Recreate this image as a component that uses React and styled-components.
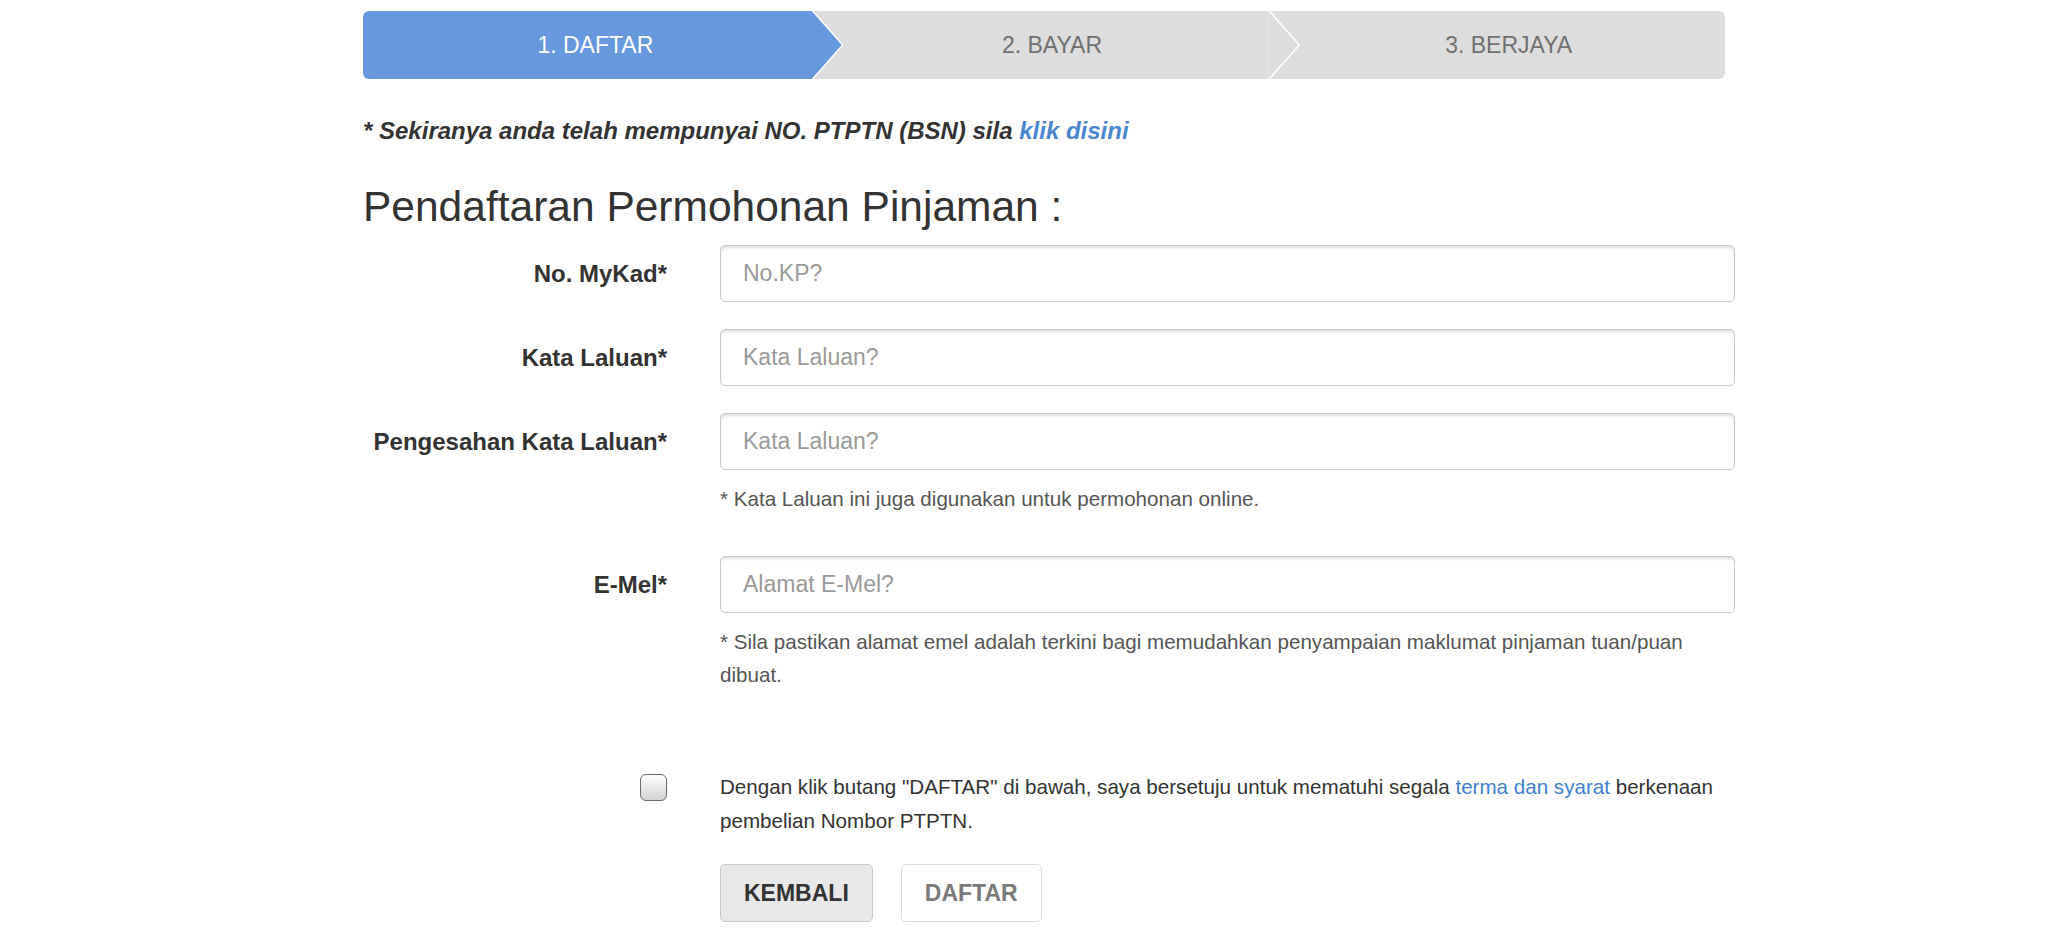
import React from "react";
import styled, { createGlobalStyle, css } from "styled-components";

const GlobalStyle = createGlobalStyle`
  body {
    margin: 0;
    background: #ffffff;
    font-family: "Liberation Sans", Arial, Helvetica, sans-serif;
    color: #333333;
  }
`;

const Page = styled.div`
  width: 1372px;
  margin-left: 363px;
  padding-top: 11px;
`;

// stepper
const Stepper = styled.div`
  display: flex;
  width: 1362px;
  height: 68px;
`;

const Step = styled.div`
  position: relative;
  flex: 1;
  display: flex;
  align-items: center;
  justify-content: center;
  padding-left: ${(p) => (p.$first ? "16px" : "24px")};
  font-size: 23px;
  background: ${(p) => (p.$active ? "#6698dd" : "#dddddd")};
  color: ${(p) => (p.$active ? "#ffffff" : "#707070")};
  z-index: ${(p) => p.$z};

  &:first-child {
    border-radius: 6px 0 0 6px;
  }
  &:last-child {
    border-radius: 0 6px 6px 0;
  }

  ${(p) =>
    p.$arrow &&
    css`
      &::before {
        content: "";
        position: absolute;
        top: 0;
        right: -32px;
        width: 32px;
        height: 68px;
        background: #ffffff;
        clip-path: polygon(0 0, 2px 0, 32px 50%, 2px 100%, 0 100%);
      }
      &::after {
        content: "";
        position: absolute;
        top: 0;
        right: -30px;
        width: 30px;
        height: 68px;
        background: ${p.$active ? "#6698dd" : "#dddddd"};
        clip-path: polygon(0 0, 30px 50%, 0 100%);
      }
    `}
`;

const Notice = styled.p`
  margin: 38px 0 0;
  font-size: 24px;
  line-height: 28px;
  font-weight: bold;
  font-style: italic;
  color: #333333;
`;

const Link = styled.a`
  color: ${(p) => p.$color || "#4a86d0"};
  text-decoration: none;
`;

const Heading = styled.h1`
  margin: 37px 0 13px;
  font-size: 42.5px;
  line-height: 50px;
  font-weight: normal;
  color: #333333;
`;

// form
const Row = styled.div`
  display: grid;
  grid-template-columns: 304px 1015px;
  column-gap: 53px;
  align-items: start;
  margin-bottom: ${(p) => p.$mb || "27px"};
  margin-top: ${(p) => p.$mt || "0"};
`;

const Label = styled.label`
  height: 57px;
  display: flex;
  align-items: center;
  justify-content: flex-end;
  font-size: 24px;
  font-weight: bold;
  color: #333333;
  white-space: nowrap;
`;

const Field = styled.div`
  display: flex;
  flex-direction: column;
`;

const Input = styled.input`
  box-sizing: border-box;
  width: 100%;
  height: 57px;
  padding: 0 22px;
  border: 1px solid #c9c9c9;
  border-radius: 5px;
  box-shadow: inset 0 3px 3px -1px rgba(0, 0, 0, 0.13);
  font-family: inherit;
  font-size: 23px;
  color: #333333;
  outline: none;

  &::placeholder {
    color: #9a9a9a;
  }
`;

const Help = styled.p`
  margin: 12px 0 14px;
  font-size: 20.6px;
  line-height: 33px;
  color: #555555;
`;

const CheckCell = styled.div`
  height: 34px;
  display: flex;
  align-items: center;
  justify-content: flex-end;
`;

const CheckBox = styled.span`
  box-sizing: border-box;
  width: 27px;
  height: 27px;
  border: 1px solid #6a6a6a;
  border-radius: 6px;
  background: linear-gradient(#ffffff, #d2d2d2);
`;

const Agree = styled.p`
  margin: 0;
  font-size: 20.6px;
  line-height: 34px;
  color: #333333;
`;

const Buttons = styled.div`
  display: flex;
  gap: 28px;
`;

const Button = styled.button`
  box-sizing: border-box;
  height: 58px;
  padding: 0 23px;
  border-radius: 5px;
  font-family: inherit;
  font-size: 23px;
  font-weight: bold;
  ${(p) =>
    p.$primary
      ? css`
          background: #e8e8e8;
          border: 1px solid #c8c8c8;
          color: #333333;
        `
      : css`
          background: #ffffff;
          border: 1px solid #dcdcdc;
          color: #7a7a7a;
        `}
`;

const steps = ["1. DAFTAR", "2. BAYAR", "3. BERJAYA"];

export default function App() {
  return (
    <>
      <GlobalStyle />
      <Page>
        <Stepper>
          {steps.map((s, i) => (
            <Step
              key={s}
              $active={i === 0}
              $first={i === 0}
              $arrow={i < steps.length - 1}
              $z={steps.length - i}
            >
              {s}
            </Step>
          ))}
        </Stepper>

        <Notice>
          * Sekiranya anda telah mempunyai NO. PTPTN (BSN) sila{" "}
          <Link href="#">klik disini</Link>
        </Notice>

        <Heading>Pendaftaran Permohonan Pinjaman :</Heading>

        <Row>
          <Label>No. MyKad*</Label>
          <Field>
            <Input placeholder="No.KP?" />
          </Field>
        </Row>

        <Row>
          <Label>Kata Laluan*</Label>
          <Field>
            <Input type="password" placeholder="Kata Laluan?" />
          </Field>
        </Row>

        <Row $mb="0">
          <Label>Pengesahan Kata Laluan*</Label>
          <Field>
            <Input type="password" placeholder="Kata Laluan?" />
            <Help>* Kata Laluan ini juga digunakan untuk permohonan online.</Help>
          </Field>
        </Row>

        <Row $mt="27px" $mb="0">
          <Label>E-Mel*</Label>
          <Field>
            <Input placeholder="Alamat E-Mel?" />
            <Help>
              * Sila pastikan alamat emel adalah terkini bagi memudahkan penyampaian
              maklumat pinjaman tuan/puan dibuat.
            </Help>
          </Field>
        </Row>

        <Row $mt="65px" $mb="26px">
          <CheckCell>
            <CheckBox />
          </CheckCell>
          <Agree>
            Dengan klik butang "DAFTAR" di bawah, saya bersetuju untuk mematuhi
            segala <Link href="#" $color="#3f7fcf">terma dan syarat</Link>{" "}
            berkenaan pembelian Nombor PTPTN.
          </Agree>
        </Row>

        <Row>
          <div />
          <Buttons>
            <Button $primary>KEMBALI</Button>
            <Button>DAFTAR</Button>
          </Buttons>
        </Row>
      </Page>
    </>
  );
}
